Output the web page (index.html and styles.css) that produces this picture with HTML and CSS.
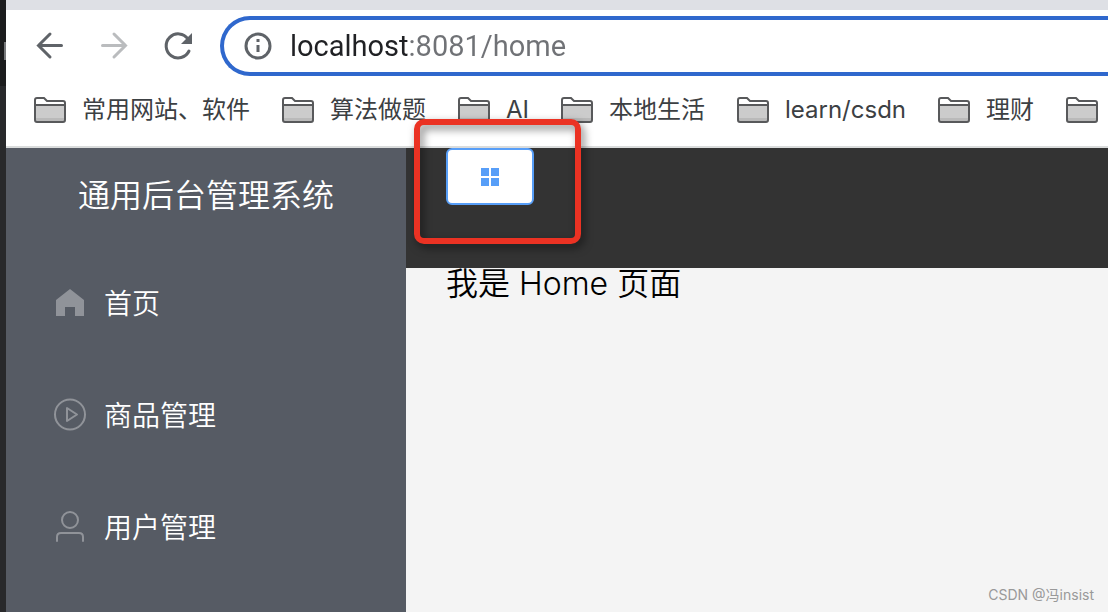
FILE: index.html
```html
<!DOCTYPE html>
<html lang="zh-CN">
<head>
    <meta charset="UTF-8">
    <meta name="viewport" content="width=device-width, initial-scale=1.0">
    <title>通用后台管理系统</title>
    <link rel="stylesheet" href="styles.css">
</head>
<body>
    <!-- Shared folder icon -->
    <svg class="sprite" aria-hidden="true">
        <symbol id="folder" viewBox="0 0 32 26">
            <path d="M1 8h30v15a2 2 0 0 1-2 2H3a2 2 0 0 1-2-2z" fill="#ccc"/>
            <path d="M2 21h28v3H2z" fill="#bababa"/>
            <path d="M1 3a2 2 0 0 1 2-2h7l3 3h16a2 2 0 0 1 2 2v17a2 2 0 0 1-2 2H3a2 2 0 0 1-2-2zM1 8h30" fill="none" stroke="#58595b" stroke-width="2"/>
        </symbol>
    </svg>

    <div class="desktop-edge"></div>

    <div class="browser">
        <div class="tab-strip"></div>

        <!-- Toolbar -->
        <div class="toolbar">
            <button class="nav-btn" aria-label="后退">
                <svg viewBox="0 0 32 32"><path d="M27.500 15.500h-23M16 4L4.500 15.500 16 27"/></svg>
            </button>
            <button class="nav-btn" aria-label="前进" disabled>
                <svg viewBox="0 0 32 32"><path d="M4.500 15.500h23M16 4l11.500 11.500L16 27"/></svg>
            </button>
            <button class="nav-btn" aria-label="重新加载">
                <svg viewBox="0 0 32 32"><path d="M27 21A12 12 0 1 1 26 9"/><path class="solid" d="M30 3v11H19z"/></svg>
            </button>
            <div class="address-bar">
                <svg class="info-icon" viewBox="0 0 28 28"><circle cx="14" cy="14" r="12"/><path d="M14 13v7M14 7v3"/></svg>
                <input class="address-input" type="text" value="localhost:8081/home" aria-label="地址" spellcheck="false">
            </div>
        </div>

        <!-- Bookmarks -->
        <nav class="bookmarks">
            <a href="#"><svg><use href="#folder"/></svg>常用网站、软件</a>
            <a href="#"><svg><use href="#folder"/></svg>算法做题</a>
            <a href="#"><svg><use href="#folder"/></svg>AI</a>
            <a href="#"><svg><use href="#folder"/></svg>本地生活</a>
            <a href="#"><svg><use href="#folder"/></svg>learn/csdn</a>
            <a href="#"><svg><use href="#folder"/></svg>理财</a>
            <a href="#" aria-label="书签文件夹"><svg><use href="#folder"/></svg></a>
        </nav>

        <!-- Page -->
        <div class="page">
            <aside class="sidebar">
                <h3>通用后台管理系统</h3>
                <ul class="menu">
                    <li><a href="#">
                        <svg viewBox="0 -1 36 36"><path class="solid" d="M4 15L18 4l14 11v16h-9v-9H13v9H4z"/></svg>
                        首页
                    </a></li>
                    <li><a href="#">
                        <svg viewBox="0 -1 36 36"><circle cx="18" cy="17.500" r="15"/><path d="M15 11v13l10-6.500z"/></svg>
                        商品管理
                    </a></li>
                    <li><a href="#">
                        <svg viewBox="0 -1 36 36"><circle cx="18" cy="11" r="8"/><path d="M5 32v-4q0-4 4-4h18q4 0 4 4v4"/></svg>
                        用户管理
                    </a></li>
                </ul>
            </aside>
            <div class="content">
                <header class="header">
                    <button class="collapse-btn" aria-label="折叠菜单">
                        <svg viewBox="0 0 18 18"><path d="M0 0h8v8H0zM10 0h8v8h-8zM0 10h8v8H0zM10 10h8v8h-8z"/></svg>
                    </button>
                    <div class="highlight"></div>
                </header>
                <main class="main">我是 Home 页面</main>
            </div>
        </div>
    </div>

    <div class="watermark">CSDN @冯insist</div>
</body>
</html>
```

FILE: styles.css
```css
* {
    box-sizing: border-box;
}

body {
    margin: 0;
    display: flex;
    height: 100vh;
    overflow: hidden;
    font-family: Inter, 'Noto Sans CJK SC', sans-serif;
}

a {
    color: inherit;
    text-decoration: none;
}

button {
    padding: 0;
    cursor: pointer;
}

.sprite {
    position: absolute;
    width: 0;
    height: 0;
}

.desktop-edge {
    flex: 0 0 6px;
    background: linear-gradient(#1c1d1e 86px, #28292b 86px);
}

.desktop-edge::before {
    content: '';
    display: block;
    width: 2px;
    height: 18px;
    margin: 42px 0 0 4px;
    background: #77797b;
}

.browser {
    flex: 1;
    min-width: 0;
    display: flex;
    flex-direction: column;
    background: #fff;
}

.tab-strip {
    height: 10px;
    background: #dee0e5;
}

/* Toolbar */
.toolbar {
    display: flex;
    align-items: center;
    gap: 32px;
    padding: 6px 0 0 28px;
}

.nav-btn {
    flex: none;
    width: 32px;
    height: 32px;
    border: none;
    background: none;
}

.nav-btn svg {
    display: block;
    width: 32px;
    height: 32px;
    fill: none;
    stroke: #5f6368;
    stroke-width: 3;
    stroke-linecap: round;
}

.nav-btn:disabled svg {
    stroke: #babcbe;
}

.nav-btn .solid {
    fill: #5f6368;
    stroke: none;
}

.address-bar {
    flex: 1;
    display: flex;
    align-items: center;
    gap: 18px;
    height: 60px;
    margin-left: -6px;
    padding-left: 20px;
    border: 4px solid #2f68cd;
    border-right: none;
    border-radius: 30px 0 0 30px;
}

.info-icon {
    width: 28px;
    height: 28px;
    fill: none;
    stroke: #5f6368;
    stroke-width: 3;
}

.address-input {
    flex: 1;
    min-width: 0;
    padding: 0;
    border: none;
    outline: none;
    font: 29px Roboto, sans-serif;
    /* host dark, port and path grey */
    color: transparent;
    background: linear-gradient(90deg, #202124 119px, #707276 119px);
    -webkit-background-clip: text;
    background-clip: text;
}

/* Bookmarks */
.bookmarks {
    display: flex;
    align-items: center;
    gap: 32px;
    height: 72px;
    padding: 0 0 2px 28px;
    border-bottom: 2px solid #dadcdc;
    overflow: hidden;
    font-size: 24px;
    line-height: 32px;
    color: #3c4043;
    white-space: nowrap;
}

.bookmarks a {
    display: flex;
    align-items: center;
    gap: 16px;
}

.bookmarks svg {
    width: 32px;
    height: 26px;
}

/* Page */
.page {
    flex: 1;
    display: flex;
    min-height: 0;
}

.sidebar {
    flex: 0 0 400px;
    background: #565b64;
    color: #fff;
    overflow: hidden;
}

.sidebar h3 {
    margin: 0;
    font-size: 32px;
    font-weight: 350;
    line-height: 96px;
    text-align: center;
}

.menu {
    margin: 0;
    padding: 2px 0 0;
    list-style: none;
}

.menu a {
    display: flex;
    align-items: center;
    gap: 16px;
    height: 112px;
    padding-left: 46px;
    font-size: 28px;
    font-weight: 350;
}

.menu svg {
    width: 36px;
    height: 36px;
    fill: none;
    stroke: #909399;
    stroke-width: 2;
    stroke-linecap: round;
    stroke-linejoin: round;
}

.menu .solid {
    fill: #909399;
    stroke: none;
}

.content {
    flex: 1;
    min-width: 0;
    display: flex;
    flex-direction: column;
    background: #f4f4f4;
}

.header {
    position: relative;
    height: 120px;
    padding-left: 40px;
    background: #333;
}

.collapse-btn {
    display: flex;
    align-items: center;
    justify-content: center;
    width: 88px;
    height: 57px;
    border: 2px solid #579ef8;
    border-radius: 6px;
    background: #fff;
}

.collapse-btn svg {
    width: 18px;
    height: 18px;
    fill: #579ef8;
}

/* Red frame drawn over the button */
.highlight {
    position: absolute;
    top: -29px;
    left: 8px;
    width: 167px;
    height: 125px;
    border: 6px solid #eb3223;
    border-radius: 10px;
    filter: drop-shadow(3px 4px 4px rgba(0, 0, 0, 0.5));
    pointer-events: none;
}

.main {
    padding-left: 40px;
    font-size: 32px;
    font-weight: 350;
    line-height: 32px;
    color: #000;
}

.watermark {
    position: absolute;
    right: 14px;
    bottom: 7px;
    font: 14px/20px Inter, 'Noto Sans CJK SC', sans-serif;
    color: #999;
}
```
